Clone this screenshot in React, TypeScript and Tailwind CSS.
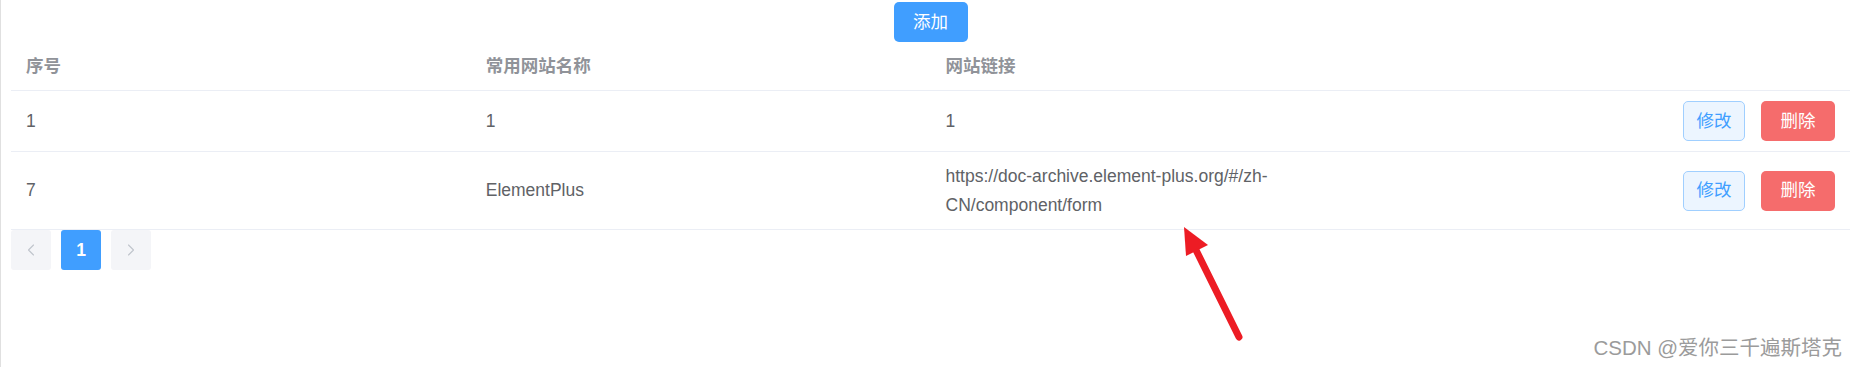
import { ChevronLeft, ChevronRight } from "lucide-react";

const rows = [
  { id: "1", name: "1", url: "1" },
  { id: "7", name: "ElementPlus", url: "https://doc-archive.element-plus.org/#/zh-CN/component/form" },
];

const App = () => {
  return (
    <div
      className="relative w-[1857px] h-[367px] bg-white border-l border-[#e0e0e0] overflow-hidden"
      style={{ fontFamily: '"Liberation Sans", "Noto Sans CJK SC", sans-serif' }}
    >
      <div className="pl-[10px] pr-[7px] pt-[2px]">
        {/* add button */}
        <div className="flex justify-center">
          <button className="w-[74px] h-[40px] rounded-[5px] bg-[#409eff] text-white text-[17.5px]">
            添加
          </button>
        </div>

        {/* table */}
        <div className="mt-[1px] text-[17.5px]">
          <div className="grid grid-cols-4 h-[48px] items-center border-b border-[#ebeef5] font-bold text-[#909399]">
            <div className="px-[15px]">序号</div>
            <div className="px-[15px]">常用网站名称</div>
            <div className="px-[15px]">网站链接</div>
            <div className="px-[15px]"></div>
          </div>

          {rows.map((row, index) => (
            <div
              key={index}
              className="grid grid-cols-4 items-center min-h-[61px] border-b border-[#ebeef5] text-[#606266] leading-[28.5px]"
            >
              <div className="px-[15px] py-[10px]">{row.id}</div>
              <div className="px-[15px] py-[10px]">{row.name}</div>
              <div className="px-[15px] py-[10px]">{row.url}</div>
              <div className="px-[15px] py-[10px] flex justify-end gap-[16px]">
                <button className="w-[62px] h-[40px] rounded-[5px] border border-[#a0cfff] bg-[#ecf5ff] text-[#409eff] text-[17.5px]">
                  修改
                </button>
                <button className="w-[74px] h-[40px] rounded-[5px] bg-[#f56c6c] text-white text-[17.5px]">
                  删除
                </button>
              </div>
            </div>
          ))}
        </div>

        {/* pagination */}
        <div className="flex gap-[10px]">
          <div className="w-[40px] h-[40px] rounded-[3px] bg-[#f4f5f8] flex items-center justify-center text-[#c0c4cc]">
            <ChevronLeft size={20} strokeWidth={1.3} />
          </div>
          <div className="w-[40px] h-[40px] rounded-[3px] bg-[#409eff] flex items-center justify-center text-white font-bold text-[17.5px]">
            1
          </div>
          <div className="w-[40px] h-[40px] rounded-[3px] bg-[#f4f5f8] flex items-center justify-center text-[#c0c4cc]">
            <ChevronRight size={20} strokeWidth={1.3} />
          </div>
        </div>
      </div>

      {/* annotation arrow */}
      <svg className="absolute left-0 top-0 pointer-events-none" width="1857" height="367">
        <line x1="1238" y1="337" x2="1193" y2="246" stroke="#ed1c24" strokeWidth="7" strokeLinecap="round" />
        <polygon points="1183,227 1207,245 1185,256" fill="#ed1c24" />
      </svg>

      {/* watermark */}
      <div className="absolute right-[15px] top-[338px] text-[20.5px] text-[#9b9b9b] leading-none">
        CSDN @爱你三千遍斯塔克
      </div>
    </div>
  );
};

export default App;
